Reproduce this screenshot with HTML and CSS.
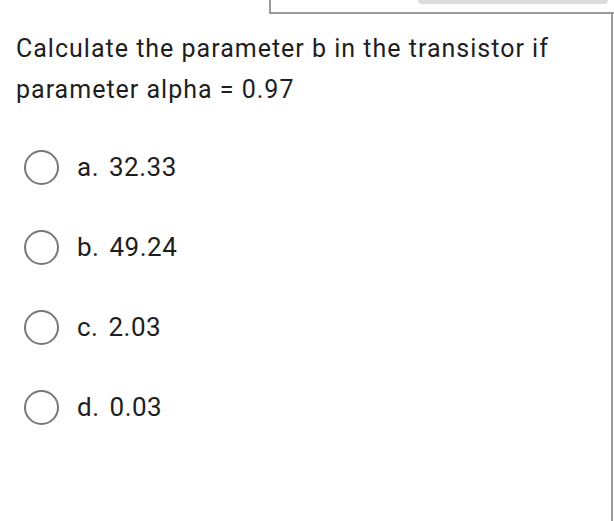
FILE: index.html
```html
<!DOCTYPE html>
<html>
<head>
<meta charset="utf-8">
<link rel="stylesheet" href="styles.css">
</head>
<body>
<div class="page">
  <div class="topbar">
    <div class="tab">
      <div class="btn"></div>
    </div>
  </div>
  <div class="panel">
    <div class="question">Calculate the parameter b in the transistor if parameter alpha = 0.97</div>
    <div class="options">
      <div class="option"><span class="radio"></span><span class="label">a.</span><span class="value">32.33</span></div>
      <div class="option"><span class="radio"></span><span class="label">b.</span><span class="value">49.24</span></div>
      <div class="option"><span class="radio"></span><span class="label">c.</span><span class="value">2.03</span></div>
      <div class="option"><span class="radio"></span><span class="label">d.</span><span class="value">0.03</span></div>
    </div>
  </div>
</div>
</body>
</html>
```

FILE: styles.css
```css
html, body {
  margin: 0;
  padding: 0;
  background: #fff;
}
.page {
  width: 614px;
  height: 521px;
  display: flex;
  flex-direction: column;
  font-family: Roboto, "Noto Sans", sans-serif;
  color: #1e1e1e;
}
.topbar {
  display: flex;
  justify-content: flex-end;
  height: 14px;
  flex: none;
}
.tab {
  width: 337px;
  border-left: 2px solid #9a9a9a;
  border-bottom: 2px solid #9a9a9a;
  display: flex;
  justify-content: flex-end;
  align-items: flex-start;
  padding-right: 6px;
}
.btn {
  width: 190px;
  height: 4px;
  background: #dcdcdc;
  border-radius: 0 0 6px 6px;
}
.panel {
  flex: 1;
  border-right: 2px solid #9a9a9a;
  margin-right: 1px;
  padding: 14px 0 0 16px;
}
.question {
  font-size: 25px;
  letter-spacing: 1px;
  line-height: 41px;
  width: 560px;
}
.options {
  display: flex;
  flex-direction: column;
  margin-top: 39px;
  gap: 44px;
}
.option {
  display: flex;
  align-items: center;
  height: 36px;
  font-size: 26px;
  letter-spacing: 0.5px;
}
.radio {
  box-sizing: border-box;
  width: 35px;
  height: 35px;
  border: 2px solid #777;
  border-radius: 50%;
  margin-left: 8px;
  margin-right: 18px;
}
.label {
  margin-right: 10px;
}
```
